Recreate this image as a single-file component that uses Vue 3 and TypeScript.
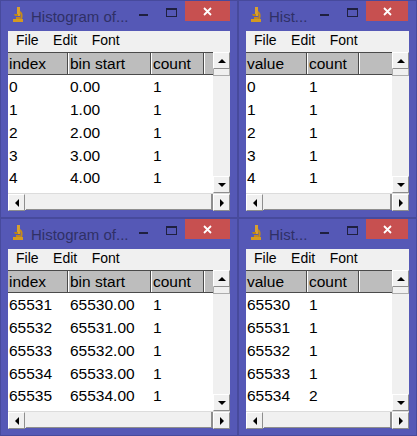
<script setup lang="ts">
interface Win {
  title: string
  narrow: boolean
  cols: { label: string; width: number }[]
  rows: string[][]
}
const idxCols = [
  { label: 'index', width: 60 },
  { label: 'bin start', width: 82 },
  { label: 'count', width: 52 },
]
const valCols = [
  { label: 'value', width: 61 },
  { label: 'count', width: 51 },
]
const windows: Win[] = [
  {
    title: 'Histogram of...',
    narrow: false,
    cols: idxCols,
    rows: [0, 1, 2, 3, 4].map((n) => [String(n), n + '.00', '1']),
  },
  {
    title: 'Hist...',
    narrow: true,
    cols: valCols,
    rows: [0, 1, 2, 3, 4].map((n) => [String(n), '1']),
  },
  {
    title: 'Histogram of...',
    narrow: false,
    cols: idxCols,
    rows: [65531, 65532, 65533, 65534, 65535].map((n) => [String(n), n - 1 + '.00', '1']),
  },
  {
    title: 'Hist...',
    narrow: true,
    cols: valCols,
    rows: [65530, 65531, 65532, 65533, 65534].map((n) => [String(n), n === 65534 ? '2' : '1']),
  },
]
const menus = ['File', 'Edit', 'Font']
</script>

<template>
  <div class="desktop">
    <section v-for="(w, i) in windows" :key="i" class="window" :class="{ narrow: w.narrow }">
      <header class="titlebar">
        <svg class="logo" width="10" height="15" viewBox="0 0 10 15">
          <path d="M4 0h3v9h-3z" fill="#d8a030" />
          <path d="M7 4c2 1 3 3 2.500 6l-.5 2h-2l.5-2c.3-2-.2-3-1-4z" fill="#c48a1c" />
          <path d="M1 7h4v2h-3z" fill="#b98418" />
          <path d="M3 10h4v2h-4z" fill="#c48a1c" />
          <path d="M0 12h10v3h-10z" fill="#d49a20" />
        </svg>
        <span class="title">{{ w.title }}</span>
        <span class="min"></span>
        <span class="max"></span>
        <span class="close">
          <svg width="9" height="9" viewBox="0 0 9 9"><path d="M1 1l7 7M8 1l-7 7" stroke="#fff" stroke-width="1.800" /></svg>
        </span>
      </header>
      <div class="client">
        <nav class="menubar"><span v-for="m in menus" :key="m">{{ m }}</span></nav>
        <div class="body">
          <div class="table">
            <div class="thead">
              <span v-for="c in w.cols" :key="c.label" class="th" :style="{ width: c.width + 'px' }">{{ c.label }}</span>
              <span class="th-rest"></span>
            </div>
            <div class="tbody">
              <div v-for="(r, ri) in w.rows" :key="ri" class="tr">
                <span v-for="(v, ci) in r" :key="ci" class="td" :style="{ width: w.cols[ci].width + 'px' }">{{ v }}</span>
              </div>
            </div>
          </div>
          <div class="vbar">
            <span class="btn"><i class="up"></i></span>
            <span class="thumb"></span>
            <span class="track"></span>
            <span class="btn"><i class="down"></i></span>
          </div>
          <div class="hbar">
            <span class="btn"><i class="left"></i></span>
            <span class="hthumb"></span>
            <span class="btn"><i class="right"></i></span>
          </div>
        </div>
      </div>
    </section>
  </div>
</template>

<style scoped>
.desktop {
  width: 417px;
  height: 436px;
  display: grid;
  grid-template-columns: 238px 179px;
  grid-template-rows: 218px 218px;
  font-family: "Liberation Sans", Arial, sans-serif;
  color: #000;
  overflow: hidden;
}
.window {
  background: #5558b6;
  border: 1px solid #474a9c;
  display: flex;
  flex-direction: column;
  padding: 0 7px 7px;
  box-sizing: border-box;
}
.titlebar {
  height: 30px;
  flex: none;
  display: flex;
  align-items: flex-start;
  color: #2f3066;
  font-size: 15px;
}
.logo {
  margin: 6px 0 0 5px;
  flex: none;
}
.title {
  margin: 7px 0 0 8px;
  flex: 1;
  white-space: nowrap;
}
.min {
  width: 9px;
  height: 2px;
  margin: 13px 18px 0 0;
  background: #1f2040;
}
.max {
  width: 9px;
  height: 6px;
  margin: 7px 8px 0 0;
  border: 1px solid #1f2040;
  border-top-width: 2px;
}
.close {
  width: 45px;
  height: 20px;
  background: #c75050;
  display: flex;
  align-items: center;
  justify-content: center;
}
.narrow .close {
  width: 42px;
  margin-right: 1px;
}
.client {
  flex: 1;
  display: flex;
  flex-direction: column;
  background: #f0f0f0;
  min-height: 0;
}
.menubar {
  height: 21px;
  flex: none;
  display: flex;
  gap: 14.500px;
  align-items: flex-start;
  padding: 1px 0 0 8px;
  box-sizing: border-box;
  font-size: 14px;
  background: #f0f0f0;
}
.body {
  flex: 1;
  display: grid;
  grid-template-columns: 1fr 17px;
  grid-template-rows: 1fr 17px;
  min-height: 0;
}
.table {
  background: #fff;
  min-width: 0;
  overflow: hidden;
}
.thead {
  display: flex;
  height: 23px;
  box-sizing: border-box;
  background: #bdbdbd;
  border-top: 1px solid #4a4a4a;
  border-bottom: 1px solid #4a4a4a;
  font-size: 15.500px;
}
.th {
  box-sizing: border-box;
  padding: 2px 0 0 1px;
  border-right: 1px solid #4a4a4a;
  box-shadow: 1px 0 0 #fff;
  margin-right: 1px;
  flex: none;
}
.th-rest {
  flex: 1;
}
.tbody {
  padding-top: 1px;
}
.tr {
  display: flex;
  height: 22.750px;
  font-size: 15.500px;
  align-items: center;
}
.td {
  box-sizing: border-box;
  padding-left: 1px;
  margin-right: 1px;
  flex: none;
}
.vbar {
  display: flex;
  flex-direction: column;
  background: #f0f0f0;
}
.track {
  flex: 1;
}
.thumb {
  height: 7px;
  flex: none;
  box-sizing: border-box;
  background: #f0f0f0;
  border: 1px solid #adadad;
  border-top: 0;
}
.btn {
  width: 17px;
  height: 17px;
  box-sizing: border-box;
  flex: none;
  background: #f0f0f0;
  border: 1px solid;
  border-color: #fff #8e8e8e #8e8e8e #fff;
  display: flex;
  align-items: center;
  justify-content: center;
}
.btn i {
  display: block;
  width: 0;
  height: 0;
  border: 4px solid transparent;
}
.up {
  border-top: 0 !important;
  border-bottom-color: #000 !important;
}
.down {
  border-bottom: 0 !important;
  border-top-color: #000 !important;
}
.left {
  border-left: 0 !important;
  border-right-color: #000 !important;
}
.right {
  border-right: 0 !important;
  border-left-color: #000 !important;
}
.hbar {
  grid-column: 1 / 3;
  display: flex;
  background: #f0f0f0;
  border-top: 1px solid #dcdcdc;
}
.hthumb {
  flex: 1;
  border-right: 2px solid #8e8e8e;
  border-bottom: 1px solid #8e8e8e;
  margin-left: 1px;
}
</style>
